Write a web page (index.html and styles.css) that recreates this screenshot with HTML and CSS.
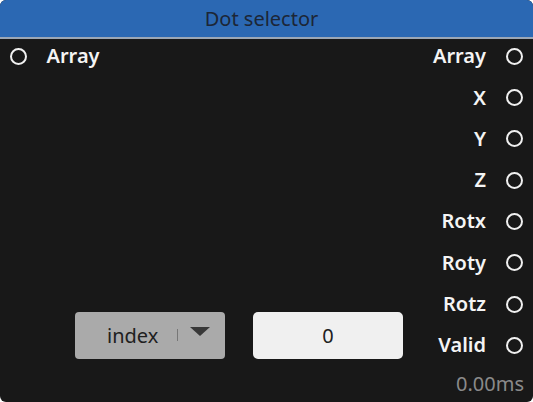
FILE: index.html
```html
<!DOCTYPE html>
<html>
<head>
<meta charset="utf-8">
<link rel="stylesheet" href="styles.css">
</head>
<body>
<div class="node">
  <div class="header">Dot selector</div>
  <div class="content">
    <div class="inputs">
      <div class="row">
        <span class="port"></span>
        <span class="label">Array</span>
      </div>
      <div class="widgets">
        <div class="dropdown">
          <span class="dd-text">index</span>
          <span class="dd-sep"></span>
          <span class="dd-arrow"></span>
        </div>
        <div class="field">0</div>
      </div>
    </div>
    <div class="outputs">
      <div class="row"><span class="label">Array</span><span class="port"></span></div>
      <div class="row"><span class="label">X</span><span class="port"></span></div>
      <div class="row"><span class="label">Y</span><span class="port"></span></div>
      <div class="row"><span class="label">Z</span><span class="port"></span></div>
      <div class="row"><span class="label">Rotx</span><span class="port"></span></div>
      <div class="row"><span class="label">Roty</span><span class="port"></span></div>
      <div class="row"><span class="label">Rotz</span><span class="port"></span></div>
      <div class="row"><span class="label">Valid</span><span class="port"></span></div>
    </div>
  </div>
  <div class="footer">0.00ms</div>
</div>
</body>
</html>
```
FILE: styles.css
```css
html, body {
  margin: 0;
  padding: 0;
  background: #ffffff;
}
body {
  font-family: "Noto Sans", "Open Sans", sans-serif;
  font-size: 20px;
}
.node {
  width: 533px;
  height: 402px;
  background: #181818;
  border-radius: 6px;
  overflow: hidden;
  display: flex;
  flex-direction: column;
}
.header {
  height: 37px;
  line-height: 37px;
  background: #2b68b3;
  border-bottom: 2px solid #9ba7b6;
  color: #1c2636;
  text-align: center;
  padding-right: 10px;
  flex: none;
}
.content {
  display: flex;
  padding: 3.3px 10px 0 9.5px;
  flex: none;
}
.inputs {
  flex: 1;
  display: flex;
  flex-direction: column;
  justify-content: space-between;
}
.outputs {
  display: flex;
  flex-direction: column;
  align-items: flex-end;
  gap: 13.3px;
}
.row {
  height: 28px;
  display: flex;
  align-items: center;
  gap: 20px;
  color: #f4f4f4;
  line-height: 28px;
}
.label {
  font-weight: 600;
}
.port {
  width: 17px;
  height: 17px;
  box-sizing: border-box;
  border: 2px solid #f0f0f0;
  border-radius: 50%;
  flex: none;
}
.widgets {
  display: flex;
  gap: 28px;
  margin-left: 65.5px;
  margin-bottom: 0.7px;
}
.dropdown {
  width: 150px;
  height: 47px;
  box-sizing: border-box;
  background: #aaaaaa;
  border-radius: 4px;
  display: flex;
  align-items: center;
  padding-left: 32px;
  color: #202020;
}
.dd-text {
  line-height: 27px;
}
.dd-sep {
  width: 1px;
  height: 12px;
  background: #777777;
  margin-left: 18.5px;
}
.dd-arrow {
  width: 0;
  height: 0;
  border-left: 10.5px solid transparent;
  border-right: 10.5px solid transparent;
  border-top: 9px solid #383838;
  margin-left: 12px;
  margin-bottom: 7.6px;
}
.field {
  width: 150px;
  height: 47px;
  background: #f0f0f0;
  border-radius: 5px;
  color: #202020;
  text-align: center;
  line-height: 47px;
}
.footer {
  margin-top: 10.6px;
  height: 27px;
  line-height: 27px;
  text-align: right;
  padding-right: 9px;
  color: #8a8a8a;
}
```
